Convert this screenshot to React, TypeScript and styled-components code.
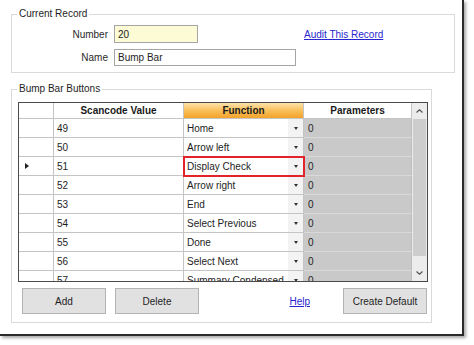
import React from 'react';
import styled, { createGlobalStyle } from 'styled-components';

const GlobalStyle = createGlobalStyle`
  html, body {
    margin: 0;
    padding: 0;
    background: #ffffff;
  }
  body {
    font-family: "Liberation Sans", Arial, sans-serif;
    font-size: 10px;
    color: #1e1e1e;
  }
`;

type Row = { code: string; fn: string; selected?: boolean };

const rows: Row[] = [
  { code: '49', fn: 'Home' },
  { code: '50', fn: 'Arrow left' },
  { code: '51', fn: 'Display Check', selected: true },
  { code: '52', fn: 'Arrow right' },
  { code: '53', fn: 'End' },
  { code: '54', fn: 'Select Previous' },
  { code: '55', fn: 'Done' },
  { code: '56', fn: 'Select Next' },
  { code: '57', fn: 'Summary Condensed' },
];

const App = () => {
  return (
    <Page>
      <GlobalStyle />
      <Window>
        <GroupBox $width={444}>
          <Legend>Current Record</Legend>
          <RecordBody>
            <FieldRow>
              <FieldLabel>Number</FieldLabel>
              <TextInput $width={84} $height={18} $yellow>20</TextInput>
              <AuditLink>Audit This Record</AuditLink>
            </FieldRow>
            <FieldRow>
              <FieldLabel>Name</FieldLabel>
              <TextInput $width={182} $height={17}>Bump Bar</TextInput>
            </FieldRow>
          </RecordBody>
        </GroupBox>

        <GroupBox $width={421} $gapTop={10}>
          <Legend>Bump Bar Buttons</Legend>
          <GridFrame>
            <Table>
              <HeaderRow>
                <HeaderCell />
                <HeaderCell>Scancode Value</HeaderCell>
                <HeaderCell $active>Function</HeaderCell>
                <HeaderCell>Parameters</HeaderCell>
              </HeaderRow>
              {rows.map((r) => (
                <DataRow key={r.code}>
                  <RowHeader>{r.selected && <Pointer />}</RowHeader>
                  <Cell>{r.code}</Cell>
                  <FnCell $selected={r.selected}>
                    <FnText>{r.fn}</FnText>
                    <DropButton>
                      <DropArrow />
                    </DropButton>
                  </FnCell>
                  <ParamCell>0</ParamCell>
                </DataRow>
              ))}
            </Table>
            <ScrollBar>
              <ScrollButton>
                <Chevron viewBox="0 0 7 4">
                  <path d="M0.5 3.5 L3.5 0.8 L6.5 3.5" />
                </Chevron>
              </ScrollButton>
              <Thumb />
              <Track />
              <ScrollButton>
                <Chevron viewBox="0 0 7 4">
                  <path d="M0.5 0.5 L3.5 3.2 L6.5 0.5" />
                </Chevron>
              </ScrollButton>
            </ScrollBar>
          </GridFrame>
          <ButtonBar>
            <Button>Add</Button>
            <Button>Delete</Button>
            <HelpLink>Help</HelpLink>
            <Button>Create Default</Button>
          </ButtonBar>
        </GroupBox>
      </Window>
    </Page>
  );
};
export default App;

const Page = styled.div`
  width: 474px;
  height: 345px;
  background: #ffffff;
  overflow: hidden;
`;

const Window = styled.div`
  box-sizing: border-box;
  width: 464px;
  height: 336px;
  padding: 8px 0 0 11px;
  background: #ffffff;
  border-right: 2px solid #2b2b2b;
  border-bottom: 2px solid #2b2b2b;
  box-shadow: 2px 2px 3px rgba(0, 0, 0, 0.35);
  display: flex;
  flex-direction: column;
`;

const GroupBox = styled.fieldset<{ $width: number; $gapTop?: number }>`
  box-sizing: border-box;
  width: ${(p) => p.$width}px;
  min-width: 0;
  margin: ${(p) => p.$gapTop ?? 0}px 0 0 0;
  padding: 0;
  border: 1px solid #dadada;
`;

const Legend = styled.legend`
  margin-left: 5px;
  padding: 0 2px;
  font-size: 10px;
  line-height: 12px;
  color: #1e1e1e;
`;

const RecordBody = styled.div`
  display: flex;
  flex-direction: column;
  gap: 6px;
  padding: 5px 0 6px 0;
`;

const FieldRow = styled.div`
  display: flex;
  align-items: center;
`;

const FieldLabel = styled.span`
  width: 96px;
  margin-right: 6px;
  text-align: right;
  color: #2a2a2a;
`;

const TextInput = styled.div<{ $width: number; $height: number; $yellow?: boolean }>`
  box-sizing: border-box;
  width: ${(p) => p.$width}px;
  height: ${(p) => p.$height}px;
  padding: 0 3px;
  display: flex;
  align-items: center;
  border: 1px solid #a5a5a5;
  background: ${(p) => (p.$yellow ? '#fcfbd6' : '#ffffff')};
  color: #1e1e1e;
`;

const AuditLink = styled.span`
  margin-left: 106px;
  color: #2727cf;
  text-decoration: underline;
`;

const GridFrame = styled.div`
  box-sizing: border-box;
  display: flex;
  width: 410px;
  height: 180px;
  margin: 7px 0 0 6px;
  border: 1px solid #4a4a4a;
  overflow: hidden;
`;

const Table = styled.div`
  display: flex;
  flex-direction: column;
  width: 393px;
`;

const columns = '35px 130px 120px 108px';

const HeaderRow = styled.div`
  display: grid;
  grid-template-columns: ${columns};
  height: 16px;
  flex: none;
`;

const HeaderCell = styled.div<{ $active?: boolean }>`
  box-sizing: border-box;
  display: flex;
  align-items: center;
  justify-content: center;
  border-right: 1px solid #c4c4c4;
  border-bottom: 1px solid #c4c4c4;
  font-weight: bold;
  color: #1a1a1a;
  background: ${(p) =>
    p.$active ? 'linear-gradient(#fde2ab 0%, #f8bf5a 50%, #f3a32a 100%)' : '#ffffff'};
`;

const DataRow = styled.div`
  display: grid;
  grid-template-columns: ${columns};
  height: 19px;
  flex: none;
`;

const BaseCell = styled.div`
  box-sizing: border-box;
  display: flex;
  align-items: center;
  border-right: 1px solid #c4c4c4;
  border-bottom: 1px solid #c4c4c4;
`;

const RowHeader = styled(BaseCell)`
  background: #ffffff;
  padding-left: 6px;
`;

const Pointer = styled.span`
  width: 0;
  height: 0;
  border-top: 3.5px solid transparent;
  border-bottom: 3.5px solid transparent;
  border-left: 4px solid #222;
`;

const Cell = styled(BaseCell)`
  padding-left: 3px;
  background: #ffffff;
`;

const FnCell = styled(BaseCell)<{ $selected?: boolean }>`
  position: relative;
  background: #ffffff;
  z-index: ${(p) => (p.$selected ? 1 : 0)};
  outline: ${(p) => (p.$selected ? '2px solid #e2232b' : 'none')};
  outline-offset: -1px;
`;

const FnText = styled.span`
  flex: 1;
  padding-left: 3px;
  white-space: nowrap;
  overflow: hidden;
`;

const DropButton = styled.span`
  width: 15px;
  align-self: stretch;
  display: flex;
  align-items: center;
  justify-content: center;
  background: #f3f3f3;
`;

const DropArrow = styled.span`
  width: 0;
  height: 0;
  border-left: 2.5px solid transparent;
  border-right: 2.5px solid transparent;
  border-top: 3px solid #333;
`;

const ParamCell = styled(BaseCell)`
  padding-left: 4px;
  background: #c9c9c9;
  border-bottom-color: #d9d9d9;
  border-right-color: #bdbdbd;
`;

const ScrollBar = styled.div`
  width: 15px;
  display: flex;
  flex-direction: column;
  background: #ececec;
`;

const ScrollButton = styled.div`
  height: 16px;
  flex: none;
  display: flex;
  align-items: center;
  justify-content: center;
`;

const Chevron = styled.svg`
  width: 7px;
  height: 4px;
  fill: none;
  stroke: #555;
  stroke-width: 1.2;
`;

const Thumb = styled.div`
  height: 137px;
  flex: none;
  margin: 0 1px;
  background: #cdcdcd;
`;

const Track = styled.div`
  flex: 1;
`;

const ButtonBar = styled.div`
  display: flex;
  align-items: center;
  gap: 9px;
  padding: 6px 4px 8px 10px;
`;

const Button = styled.div`
  box-sizing: border-box;
  width: 84px;
  height: 26px;
  display: flex;
  align-items: center;
  justify-content: center;
  background: #e1e1e1;
  border: 1px solid #b4b4b4;
  color: #1e1e1e;
`;

const HelpLink = styled.span`
  margin-left: auto;
  margin-right: 24px;
  color: #2727cf;
  text-decoration: underline;
`;
